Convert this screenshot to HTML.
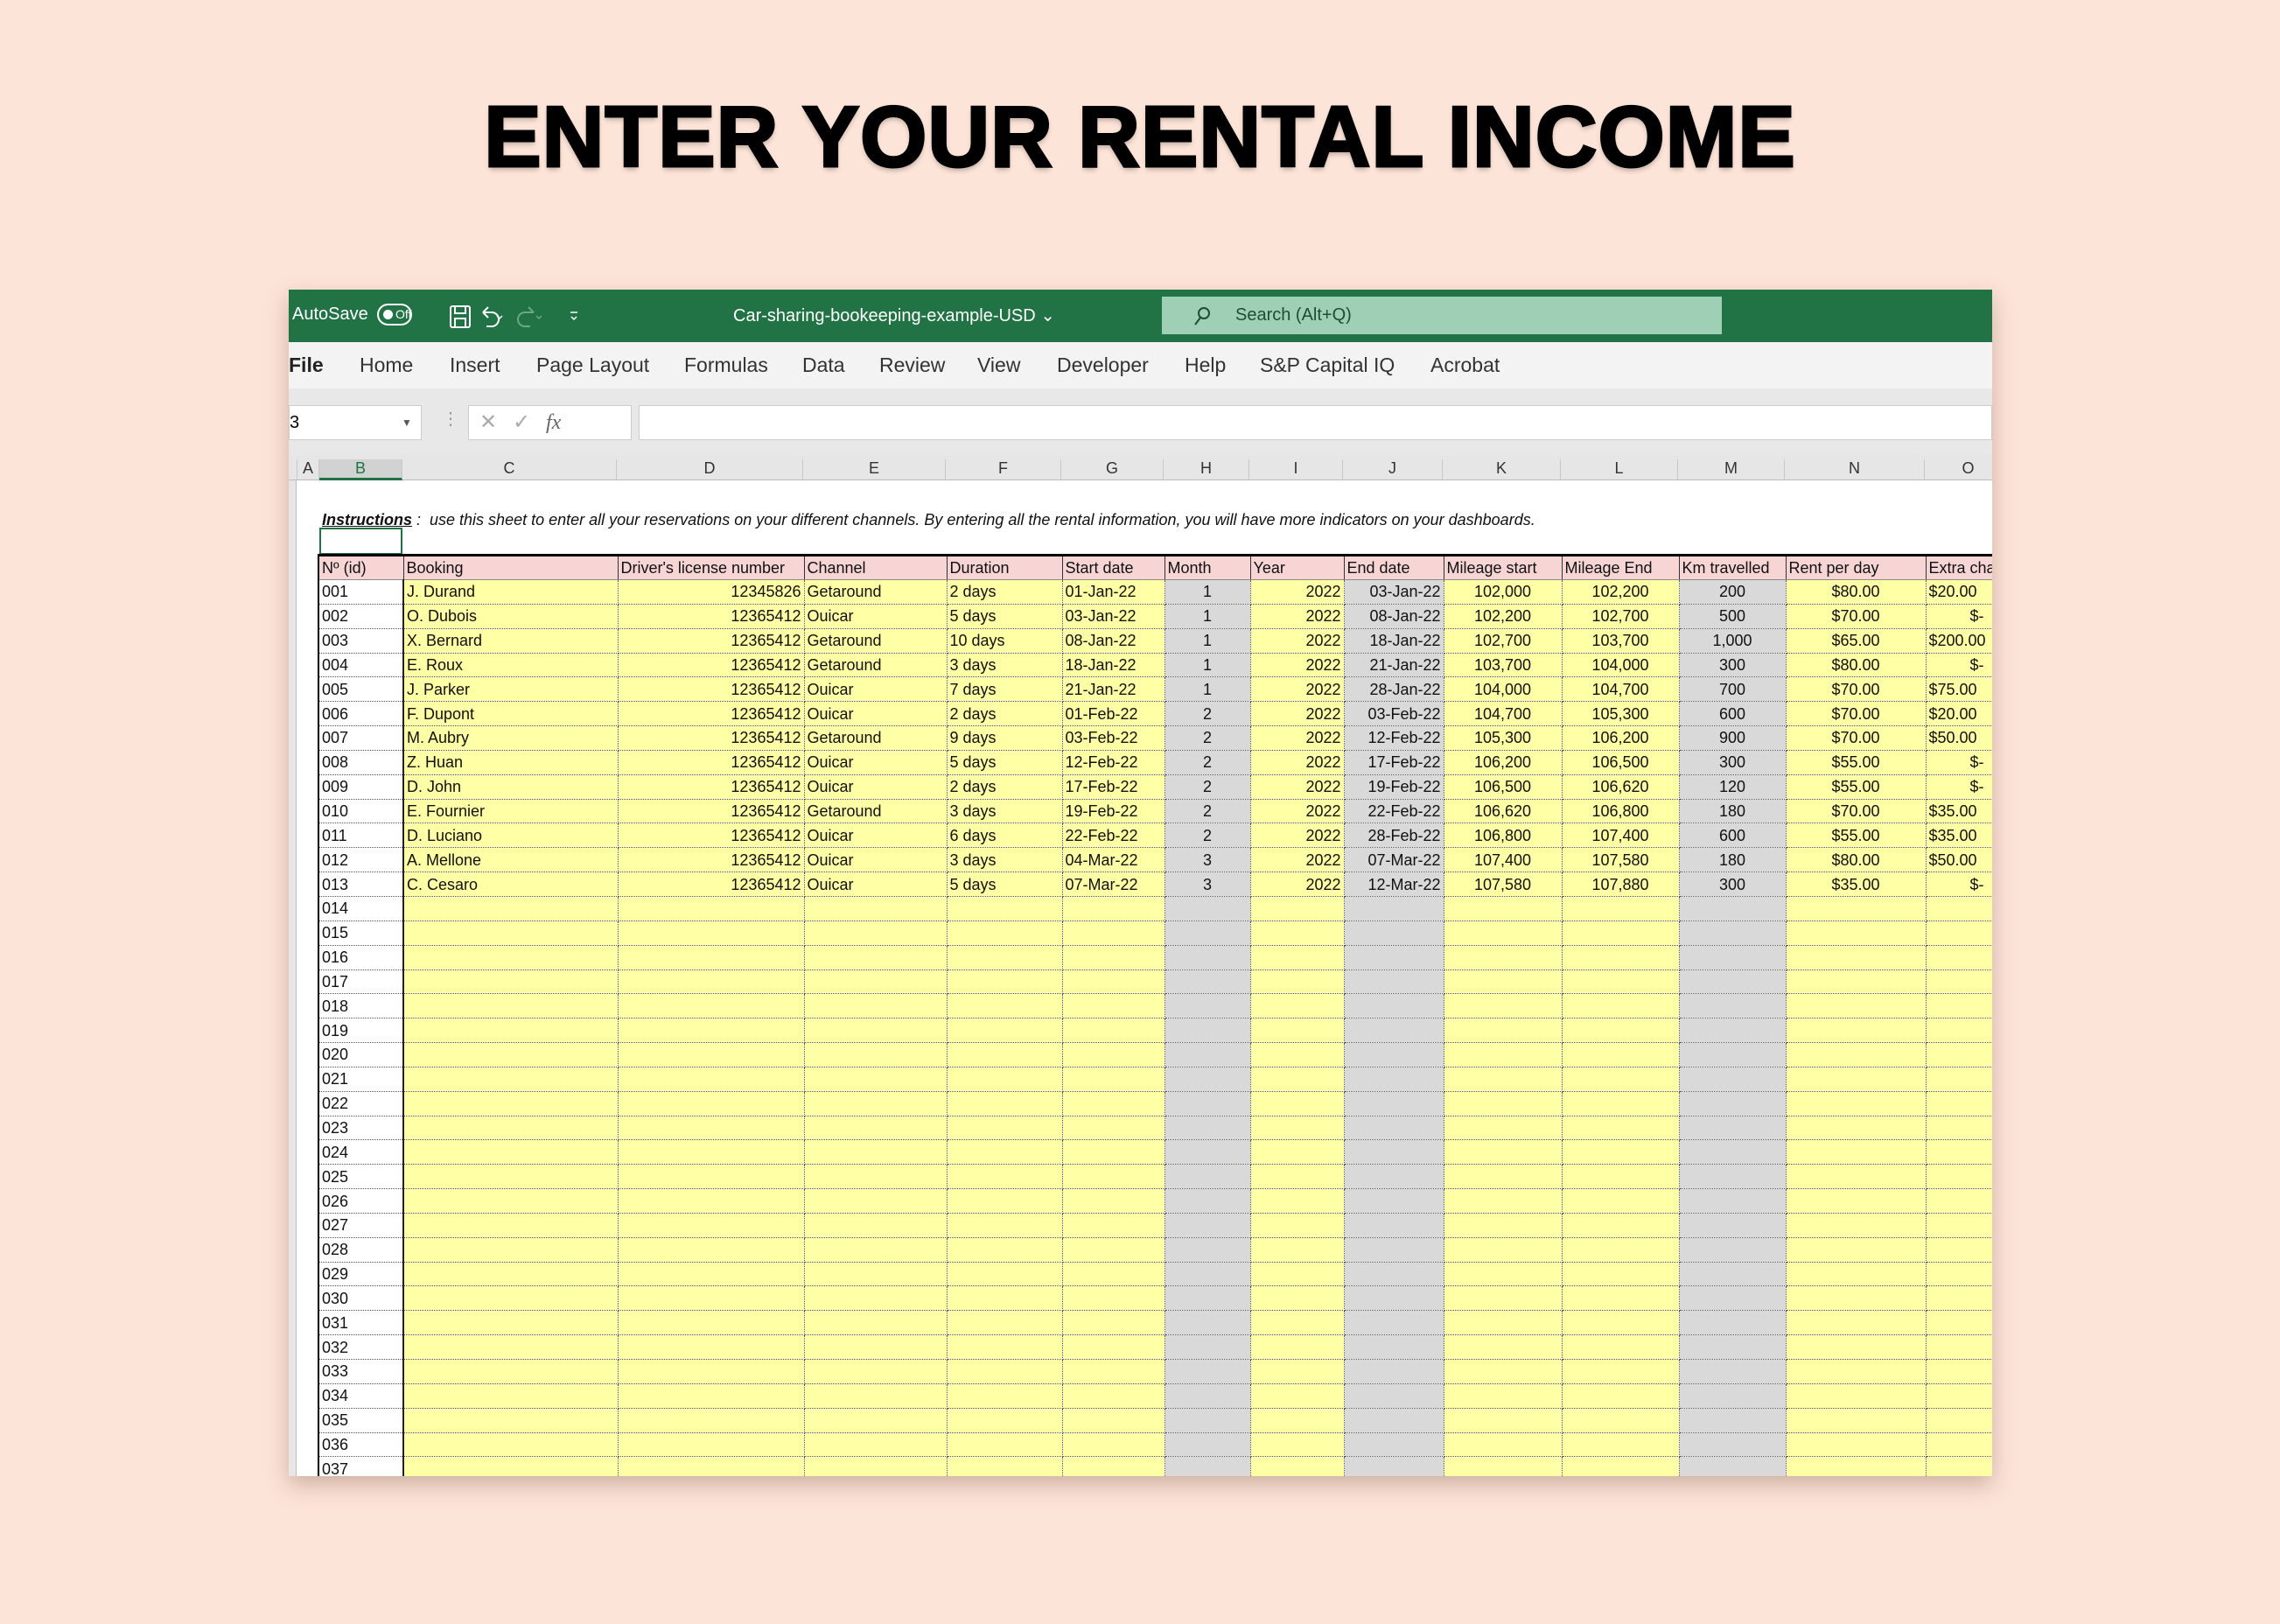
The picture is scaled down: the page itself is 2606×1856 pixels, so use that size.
<!DOCTYPE html>
<html><head><meta charset="utf-8">
<style>
*{box-sizing:border-box;margin:0;padding:0}
body{width:2606px;height:1856px;background:#fde4d8;position:relative;overflow:hidden;font-family:"Liberation Sans",sans-serif}
h1{position:absolute;left:0;width:2606px;top:104px;text-align:center;font-size:98px;line-height:104px;font-weight:bold;color:#000;-webkit-text-stroke:3px #000;letter-spacing:1px;text-shadow:0 4px 6px rgba(0,0,0,.25)}
#sheet{position:absolute;left:330px;top:331px;width:1947px;height:1356px;overflow:hidden;background:#fff;box-shadow:0 10px 24px rgba(120,80,60,.35)}
.ab{position:absolute}
#green{left:0;top:0;width:1947px;height:60px;background:#217346;color:#fff;font-size:20px}
#ribbon{left:0;top:60px;width:1947px;height:53px;background:#f3f3f3;font-size:23px;color:#333;box-shadow:0 3px 4px rgba(0,0,0,.12)}
#ribbon span{position:absolute;top:13px}
#fbar{left:0;top:113px;width:1947px;height:76px;background:#e8e8e8}
#colh{left:0;top:189px;width:1947px;height:29px;background:#e6e6e6;border-bottom:1px solid #bbb;font-size:18px;color:#333}
#colh span{position:absolute;top:5px;text-align:center;border-right:1px solid #c8c8c8;height:24px}
table{position:absolute;left:33px;top:302px;width:1937px;border-collapse:collapse;table-layout:fixed;font-size:18px;color:#111}
td{height:27.85px;border-right:1px dotted #555;border-bottom:1px dotted #555;background:#ffffa6;padding:0 3px;white-space:nowrap;overflow:hidden;line-height:26px}
tr.h td{background:#f7d5d5;border-right:1px solid #333;border-bottom:1px solid #888;border-top:3px solid #000}
td.a{background:#fff;border-left:2px solid #000;border-right:2px solid #222}
td.g{background:#d9d9d9}
.r{text-align:right}.c{text-align:center}
</style></head><body>
<h1>ENTER YOUR RENTAL INCOME</h1>
<div id="sheet">
 <div id="green" class="ab">
  <span class="ab" style="left:4px;top:17px">AutoSave</span>
  <span class="ab" style="left:101px;top:16px;width:40px;height:25px;border:2px solid #fff;border-radius:13px;font-size:14px;line-height:21px;padding-left:19px">Off<i class="ab" style="left:5px;top:5px;width:11px;height:11px;border-radius:50%;background:#fff"></i></span>
  <svg class="ab" style="left:150px;top:16px" width="200" height="30" viewBox="0 0 200 30" fill="none" stroke="#fff" stroke-width="2"><rect x="35" y="3" width="22" height="24" rx="2"/><rect x="40" y="3" width="12" height="8"/><rect x="40" y="17" width="12" height="10"/><path d="M72 10h10a8 8 0 0 1 0 16h-6M72 10l6-6M72 10l6 6"/><path d="M88 14l3 3 3-3" stroke-width="1.5"/><path d="M130 10h-10a8 8 0 0 0 0 16h6M130 10l-6-6" stroke="#6aa882"/><path d="M133 14l3 3 3-3" stroke="#6aa882" stroke-width="1.5"/><path d="M172 10h8M173 15l3 3 3-3" stroke-width="1.5"/></svg>
  <span class="ab" style="left:508px;top:17px;font-size:20px">Car-sharing-bookeeping-example-USD ⌄</span>
  <div class="ab" style="left:998px;top:8px;width:640px;height:43px;background:#9fcfb4;color:#1e4d33;font-size:20px;line-height:43px;padding-left:84px">Search (Alt+Q)
   <svg class="ab" style="left:34px;top:10px" width="24" height="24" viewBox="0 0 24 24" fill="none" stroke="#1e4d33" stroke-width="2"><circle cx="14" cy="9" r="6"/><path d="M10 14l-6 8"/></svg></div>
 </div>
 <div id="ribbon" class="ab">
  <span style="left:0;font-weight:bold;color:#222">File</span><span style="left:81px">Home</span><span style="left:184px">Insert</span><span style="left:283px">Page Layout</span><span style="left:452px">Formulas</span><span style="left:587px">Data</span><span style="left:675px">Review</span><span style="left:787px">View</span><span style="left:878px">Developer</span><span style="left:1024px">Help</span><span style="left:1110px">S&amp;P Capital IQ</span><span style="left:1305px">Acrobat</span>
 </div>
 <div id="fbar" class="ab">
  <div class="ab" style="left:0;top:19px;width:152px;height:40px;background:#fff;border:1px solid #ccc;font-size:20px;line-height:38px">3<span class="ab" style="left:128px;top:0;font-size:12px;color:#555">▼</span></div>
  <span class="ab" style="left:175px;top:22px;color:#999;font-size:20px">⋮</span>
  <div class="ab" style="left:205px;top:19px;width:187px;height:40px;background:#fff;border:1px solid #ccc;color:#aaa;font-size:24px;line-height:38px"><span class="ab" style="left:12px">✕</span><span class="ab" style="left:50px">✓</span><span class="ab" style="left:88px;font-family:'Liberation Serif',serif;font-style:italic;color:#666">fx</span></div>
  <div class="ab" style="left:400px;top:19px;width:1547px;height:40px;background:#fff;border:1px solid #ccc"></div>
 </div>
 <div id="colh" class="ab">
  <span style="left:0;width:10px"></span><span style="left:10px;width:25px">A</span><span style="left:35px;width:95px;background:#d2d2d2;border-bottom:3px solid #217346;color:#217346">B</span><span style="left:130px;width:245px">C</span><span style="left:375px;width:213px">D</span><span style="left:588px;width:163px">E</span><span style="left:751px;width:132px">F</span><span style="left:883px;width:117px">G</span><span style="left:1000px;width:98px">H</span><span style="left:1098px;width:107px">I</span><span style="left:1205px;width:114px">J</span><span style="left:1319px;width:135px">K</span><span style="left:1454px;width:134px">L</span><span style="left:1588px;width:122px">M</span><span style="left:1710px;width:160px">N</span><span style="left:1870px;width:100px">O</span>
 </div>
 <div class="ab" style="left:0;top:218px;width:9px;height:1140px;background:#e6e6e6;border-right:1px solid #bbb"></div>
 <div class="ab" style="left:38px;top:253px;font-size:18px;font-style:italic;color:#111"><b style="text-decoration:underline">Instructions</b> : &nbsp;use this sheet to enter all your reservations on your different channels. By entering all the rental information, you will have more indicators on your dashboards.</div>
 <div class="ab" style="left:35px;top:272px;width:95px;height:31px;border:2px solid #217346"></div>
 <table>
 <colgroup><col style="width:97px"><col style="width:245px"><col style="width:213px"><col style="width:163px"><col style="width:132px"><col style="width:117px"><col style="width:98px"><col style="width:107px"><col style="width:114px"><col style="width:135px"><col style="width:134px"><col style="width:122px"><col style="width:160px"><col style="width:100px"></colgroup>
 <tr class="h"><td class="a" style="background:#f7d5d5;border-top:3px solid #000">Nº (id)</td><td>Booking</td><td>Driver's license number</td><td>Channel</td><td>Duration</td><td>Start date</td><td>Month</td><td>Year</td><td>End date</td><td>Mileage start</td><td>Mileage End</td><td>Km travelled</td><td>Rent per day</td><td>Extra charges</td></tr>
 <tr><td class="a">001</td><td>J. Durand</td><td class="r">12345826</td><td>Getaround</td><td>2 days</td><td>01-Jan-22</td><td class="g c">1</td><td class="r">2022</td><td class="g r">03-Jan-22</td><td class="c">102,000</td><td class="c">102,200</td><td class="g c">200</td><td class="c">$80.00</td><td>$20.00</td></tr>
 <tr><td class="a">002</td><td>O. Dubois</td><td class="r">12365412</td><td>Ouicar</td><td>5 days</td><td>03-Jan-22</td><td class="g c">1</td><td class="r">2022</td><td class="g r">08-Jan-22</td><td class="c">102,200</td><td class="c">102,700</td><td class="g c">500</td><td class="c">$70.00</td><td style="padding-left:50px">$-</td></tr>
 <tr><td class="a">003</td><td>X. Bernard</td><td class="r">12365412</td><td>Getaround</td><td>10 days</td><td>08-Jan-22</td><td class="g c">1</td><td class="r">2022</td><td class="g r">18-Jan-22</td><td class="c">102,700</td><td class="c">103,700</td><td class="g c">1,000</td><td class="c">$65.00</td><td>$200.00</td></tr>
 <tr><td class="a">004</td><td>E. Roux</td><td class="r">12365412</td><td>Getaround</td><td>3 days</td><td>18-Jan-22</td><td class="g c">1</td><td class="r">2022</td><td class="g r">21-Jan-22</td><td class="c">103,700</td><td class="c">104,000</td><td class="g c">300</td><td class="c">$80.00</td><td style="padding-left:50px">$-</td></tr>
 <tr><td class="a">005</td><td>J. Parker</td><td class="r">12365412</td><td>Ouicar</td><td>7 days</td><td>21-Jan-22</td><td class="g c">1</td><td class="r">2022</td><td class="g r">28-Jan-22</td><td class="c">104,000</td><td class="c">104,700</td><td class="g c">700</td><td class="c">$70.00</td><td>$75.00</td></tr>
 <tr><td class="a">006</td><td>F. Dupont</td><td class="r">12365412</td><td>Ouicar</td><td>2 days</td><td>01-Feb-22</td><td class="g c">2</td><td class="r">2022</td><td class="g r">03-Feb-22</td><td class="c">104,700</td><td class="c">105,300</td><td class="g c">600</td><td class="c">$70.00</td><td>$20.00</td></tr>
 <tr><td class="a">007</td><td>M. Aubry</td><td class="r">12365412</td><td>Getaround</td><td>9 days</td><td>03-Feb-22</td><td class="g c">2</td><td class="r">2022</td><td class="g r">12-Feb-22</td><td class="c">105,300</td><td class="c">106,200</td><td class="g c">900</td><td class="c">$70.00</td><td>$50.00</td></tr>
 <tr><td class="a">008</td><td>Z. Huan</td><td class="r">12365412</td><td>Ouicar</td><td>5 days</td><td>12-Feb-22</td><td class="g c">2</td><td class="r">2022</td><td class="g r">17-Feb-22</td><td class="c">106,200</td><td class="c">106,500</td><td class="g c">300</td><td class="c">$55.00</td><td style="padding-left:50px">$-</td></tr>
 <tr><td class="a">009</td><td>D. John</td><td class="r">12365412</td><td>Ouicar</td><td>2 days</td><td>17-Feb-22</td><td class="g c">2</td><td class="r">2022</td><td class="g r">19-Feb-22</td><td class="c">106,500</td><td class="c">106,620</td><td class="g c">120</td><td class="c">$55.00</td><td style="padding-left:50px">$-</td></tr>
 <tr><td class="a">010</td><td>E. Fournier</td><td class="r">12365412</td><td>Getaround</td><td>3 days</td><td>19-Feb-22</td><td class="g c">2</td><td class="r">2022</td><td class="g r">22-Feb-22</td><td class="c">106,620</td><td class="c">106,800</td><td class="g c">180</td><td class="c">$70.00</td><td>$35.00</td></tr>
 <tr><td class="a">011</td><td>D. Luciano</td><td class="r">12365412</td><td>Ouicar</td><td>6 days</td><td>22-Feb-22</td><td class="g c">2</td><td class="r">2022</td><td class="g r">28-Feb-22</td><td class="c">106,800</td><td class="c">107,400</td><td class="g c">600</td><td class="c">$55.00</td><td>$35.00</td></tr>
 <tr><td class="a">012</td><td>A. Mellone</td><td class="r">12365412</td><td>Ouicar</td><td>3 days</td><td>04-Mar-22</td><td class="g c">3</td><td class="r">2022</td><td class="g r">07-Mar-22</td><td class="c">107,400</td><td class="c">107,580</td><td class="g c">180</td><td class="c">$80.00</td><td>$50.00</td></tr>
 <tr><td class="a">013</td><td>C. Cesaro</td><td class="r">12365412</td><td>Ouicar</td><td>5 days</td><td>07-Mar-22</td><td class="g c">3</td><td class="r">2022</td><td class="g r">12-Mar-22</td><td class="c">107,580</td><td class="c">107,880</td><td class="g c">300</td><td class="c">$35.00</td><td style="padding-left:50px">$-</td></tr>
 <tr><td class="a">014</td><td></td><td></td><td></td><td></td><td></td><td class="g"></td><td></td><td class="g"></td><td></td><td></td><td class="g"></td><td></td><td></td></tr>
 <tr><td class="a">015</td><td></td><td></td><td></td><td></td><td></td><td class="g"></td><td></td><td class="g"></td><td></td><td></td><td class="g"></td><td></td><td></td></tr>
 <tr><td class="a">016</td><td></td><td></td><td></td><td></td><td></td><td class="g"></td><td></td><td class="g"></td><td></td><td></td><td class="g"></td><td></td><td></td></tr>
 <tr><td class="a">017</td><td></td><td></td><td></td><td></td><td></td><td class="g"></td><td></td><td class="g"></td><td></td><td></td><td class="g"></td><td></td><td></td></tr>
 <tr><td class="a">018</td><td></td><td></td><td></td><td></td><td></td><td class="g"></td><td></td><td class="g"></td><td></td><td></td><td class="g"></td><td></td><td></td></tr>
 <tr><td class="a">019</td><td></td><td></td><td></td><td></td><td></td><td class="g"></td><td></td><td class="g"></td><td></td><td></td><td class="g"></td><td></td><td></td></tr>
 <tr><td class="a">020</td><td></td><td></td><td></td><td></td><td></td><td class="g"></td><td></td><td class="g"></td><td></td><td></td><td class="g"></td><td></td><td></td></tr>
 <tr><td class="a">021</td><td></td><td></td><td></td><td></td><td></td><td class="g"></td><td></td><td class="g"></td><td></td><td></td><td class="g"></td><td></td><td></td></tr>
 <tr><td class="a">022</td><td></td><td></td><td></td><td></td><td></td><td class="g"></td><td></td><td class="g"></td><td></td><td></td><td class="g"></td><td></td><td></td></tr>
 <tr><td class="a">023</td><td></td><td></td><td></td><td></td><td></td><td class="g"></td><td></td><td class="g"></td><td></td><td></td><td class="g"></td><td></td><td></td></tr>
 <tr><td class="a">024</td><td></td><td></td><td></td><td></td><td></td><td class="g"></td><td></td><td class="g"></td><td></td><td></td><td class="g"></td><td></td><td></td></tr>
 <tr><td class="a">025</td><td></td><td></td><td></td><td></td><td></td><td class="g"></td><td></td><td class="g"></td><td></td><td></td><td class="g"></td><td></td><td></td></tr>
 <tr><td class="a">026</td><td></td><td></td><td></td><td></td><td></td><td class="g"></td><td></td><td class="g"></td><td></td><td></td><td class="g"></td><td></td><td></td></tr>
 <tr><td class="a">027</td><td></td><td></td><td></td><td></td><td></td><td class="g"></td><td></td><td class="g"></td><td></td><td></td><td class="g"></td><td></td><td></td></tr>
 <tr><td class="a">028</td><td></td><td></td><td></td><td></td><td></td><td class="g"></td><td></td><td class="g"></td><td></td><td></td><td class="g"></td><td></td><td></td></tr>
 <tr><td class="a">029</td><td></td><td></td><td></td><td></td><td></td><td class="g"></td><td></td><td class="g"></td><td></td><td></td><td class="g"></td><td></td><td></td></tr>
 <tr><td class="a">030</td><td></td><td></td><td></td><td></td><td></td><td class="g"></td><td></td><td class="g"></td><td></td><td></td><td class="g"></td><td></td><td></td></tr>
 <tr><td class="a">031</td><td></td><td></td><td></td><td></td><td></td><td class="g"></td><td></td><td class="g"></td><td></td><td></td><td class="g"></td><td></td><td></td></tr>
 <tr><td class="a">032</td><td></td><td></td><td></td><td></td><td></td><td class="g"></td><td></td><td class="g"></td><td></td><td></td><td class="g"></td><td></td><td></td></tr>
 <tr><td class="a">033</td><td></td><td></td><td></td><td></td><td></td><td class="g"></td><td></td><td class="g"></td><td></td><td></td><td class="g"></td><td></td><td></td></tr>
 <tr><td class="a">034</td><td></td><td></td><td></td><td></td><td></td><td class="g"></td><td></td><td class="g"></td><td></td><td></td><td class="g"></td><td></td><td></td></tr>
 <tr><td class="a">035</td><td></td><td></td><td></td><td></td><td></td><td class="g"></td><td></td><td class="g"></td><td></td><td></td><td class="g"></td><td></td><td></td></tr>
 <tr><td class="a">036</td><td></td><td></td><td></td><td></td><td></td><td class="g"></td><td></td><td class="g"></td><td></td><td></td><td class="g"></td><td></td><td></td></tr>
 <tr><td class="a">037</td><td></td><td></td><td></td><td></td><td></td><td class="g"></td><td></td><td class="g"></td><td></td><td></td><td class="g"></td><td></td><td></td></tr>
 </table>
</div>
</body></html>
